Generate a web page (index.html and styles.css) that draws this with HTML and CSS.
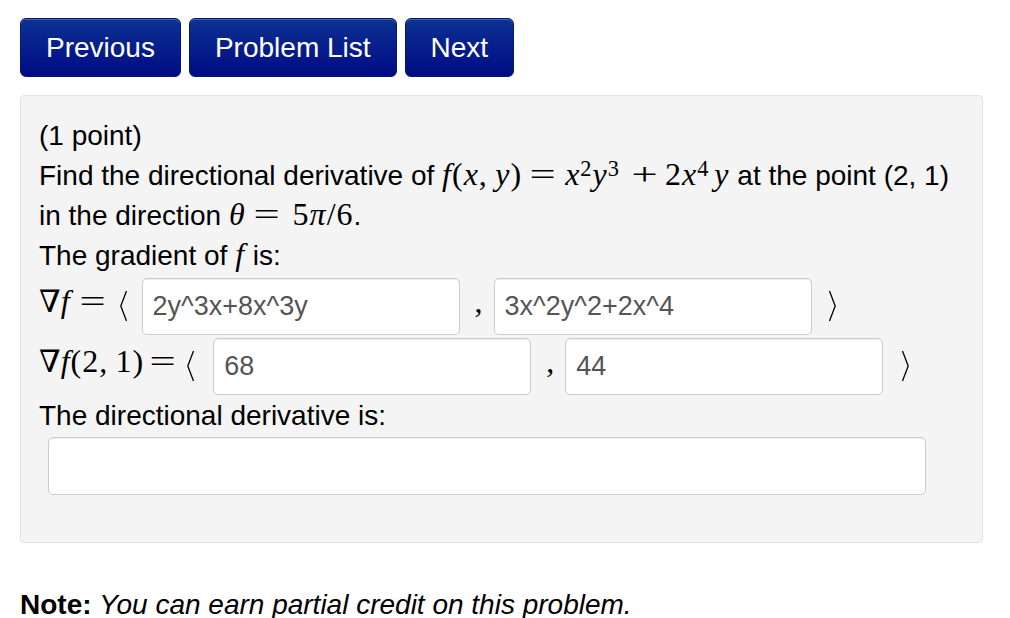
FILE: index.html
```html
<!DOCTYPE html>
<html lang="en">
<head>
<meta charset="utf-8">
<title>Problem</title>
<link rel="stylesheet" href="styles.css">
</head>
<body>
<div class="nav">
  <button class="btn">Previous</button>
  <button class="btn">Problem List</button>
  <button class="btn">Next</button>
</div>

<div class="problem">
  <div class="text">
    <div class="line">(1 point)</div>
    <div class="line">Find the directional derivative of <span class="m"><i>f</i>(<i>x</i>,&thinsp;<i>y</i>)<span class="eq">=</span><i>x</i><sup>2</sup><i>y</i><sup>3</sup><span class="pl">+</span>2<i>x</i><sup>4</sup><i class="last">y</i></span> at the point (2, 1)</div>
    <div class="line">in the direction <span class="m"><i>θ</i><span class="eq eq3">=</span>5<i>π</i>/6</span>.</div>
    <div class="line">The gradient of <span class="m"><i>f</i></span> is:</div>
  </div>

  <div class="vrow">
    <span class="m mr"><span class="nab">∇</span><i>f</i><span class="eq req">=</span></span>
    <svg class="ang open r1" width="9" height="32" viewBox="0 0 9 32"><polyline points="7.5,1 1.8,16 7.5,31"/></svg>
    <input class="ans" type="text" value="2y^3x+8x^3y">
    <span class="m mr comma">,</span>
    <input class="ans" type="text" value="3x^2y^2+2x^4">
    <svg class="ang close r1" width="9" height="32" viewBox="0 0 9 32"><polyline points="1.5,1 7.2,16 1.5,31"/></svg>
  </div>

  <div class="vrow">
    <span class="m mr"><span class="nab">∇</span><i>f</i>(2,&thinsp;1)<span class="eq req2">=</span></span>
    <svg class="ang open r2" width="9" height="32" viewBox="0 0 9 32"><polyline points="7.5,1 1.8,16 7.5,31"/></svg>
    <input class="ans" type="text" value="68">
    <span class="m mr comma">,</span>
    <input class="ans" type="text" value="44">
    <svg class="ang close r2" width="9" height="32" viewBox="0 0 9 32"><polyline points="1.5,1 7.2,16 1.5,31"/></svg>
  </div>

  <div class="line">The directional derivative is:</div>
  <input class="ans wide" type="text" value="">
</div>

<p class="note"><b>Note:</b> <em>You can earn partial credit on this problem.</em></p>
</body>
</html>
```

FILE: styles.css
```css
html, body {
  margin: 0;
  background: #ffffff;
}

body {
  padding: 18px 20px 0;
  font-family: "Liberation Sans", Arial, sans-serif;
  font-size: 28px;
  color: #000;
}

.nav {
  display: flex;
  gap: 8px;
}

.btn {
  height: 59px;
  padding: 0 25px;
  font-family: "Liberation Sans", Arial, sans-serif;
  font-size: 28px;
  color: #ffffff;
  background: linear-gradient(#0d3192, #000b84);
  border: 1px solid #001a6e;
  border-radius: 6px;
  box-shadow: inset 0 1px 0 rgba(255, 255, 255, 0.25);
}

.problem {
  margin: 18px 7px 0 0;
  background: #f4f4f4;
  border: 1px solid #e3e3e3;
  border-radius: 4px;
  padding: 20px 18px 20px;
}

.line {
  line-height: 40px;
  white-space: nowrap;
}

.m {
  font-family: "Liberation Serif", "DejaVu Serif", "Times New Roman", serif;
  font-size: 32px;
  line-height: 0;
  letter-spacing: 1px;
  white-space: nowrap;
}

.m i {
  font-style: italic;
}

.m i.last {
  margin-left: 5px;
}

.m sup {
  font-size: 0.7em;
  vertical-align: 0.42em;
  line-height: 0;
}

.eq,
.pl {
  display: inline-block;
  width: 25px;
  text-align: center;
  letter-spacing: 0;
  transform: scaleX(1.45);
}

.eq {
  margin: 0 10px 0 8px;
}

.eq.eq3 {
  margin: 0 14px 0 8px;
}

.pl {
  margin: 0 8px 0 12px;
}

.nab {
  font-family: "DejaVu Serif", serif;
  font-size: 31px;
  letter-spacing: 0;
}

.vrow {
  display: flex;
  align-items: center;
  height: 60px;
}

.mr {
  line-height: 40px;
  margin-bottom: 11px;
}

.eq.req {
  margin: 0 14px 0 9px;
}

.eq.req2 {
  margin: 0 11px 0 6px;
}

.ang {
  flex: none;
}

.ang polyline {
  fill: none;
  stroke: #000;
  stroke-width: 1.3;
}

.ang.open.r1 {
  margin-right: 14px;
}

.ang.open.r2 {
  margin-right: 18px;
}

.ang.close.r1 {
  margin-left: 16px;
}

.ang.close.r2 {
  margin-left: 18px;
}

.comma {
  margin: 0 10px 11px 15px;
}

.ans {
  box-sizing: border-box;
  width: 318px;
  height: 57px;
  margin: 0;
  padding: 0 10px;
  font-family: "Liberation Sans", Arial, sans-serif;
  font-size: 27px;
  color: #555555;
  background: #ffffff;
  border: 1px solid #cccccc;
  border-radius: 5px;
  box-shadow: inset 0 1px 1px rgba(0, 0, 0, 0.075);
  outline: none;
}

.ans.wide {
  display: block;
  width: 878px;
  height: 58px;
  margin: 1px 0 27px 9px;
}

.note {
  margin: 42px 0 0;
  line-height: 40px;
}

.note em {
  font-style: italic;
}
```
